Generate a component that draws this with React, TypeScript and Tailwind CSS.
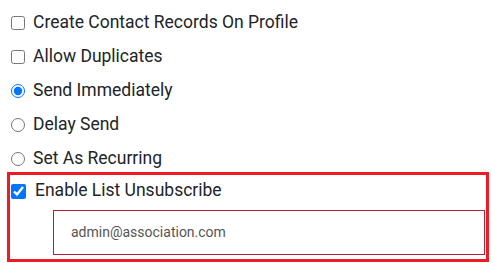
import React from "react";

const rowCls = "flex items-center h-[34px] pl-[11px] gap-[8px]";
const inputCls = "m-0 w-[14px] h-[14px] shrink-0";
const labelCls = "text-[17.5px] text-[#212529] leading-none";

export default function App() {
  return (
    <div className="w-[492px] h-[263px] bg-white pt-[6px] overflow-hidden" style={{ fontFamily: "Roboto, 'Liberation Sans', sans-serif" }}>
      <label className={rowCls}>
        <input type="checkbox" className={inputCls} />
        <span className={labelCls}>Create Contact Records On Profile</span>
      </label>
      <label className={rowCls}>
        <input type="checkbox" className={inputCls} />
        <span className={labelCls}>Allow Duplicates</span>
      </label>
      <label className={rowCls}>
        <input type="radio" name="send" defaultChecked className={inputCls} />
        <span className={labelCls}>Send Immediately</span>
      </label>
      <label className={rowCls}>
        <input type="radio" name="send" className={inputCls} />
        <span className={labelCls}>Delay Send</span>
      </label>
      <label className={rowCls}>
        <input type="radio" name="send" className={inputCls} />
        <span className={labelCls}>Set As Recurring</span>
      </label>
      <div className="-mt-[4px] ml-[7px] w-[482px] border-[3px] border-[#ed1c24] pb-[4px]">
        <label className="flex items-center h-[32px] pl-[1px] gap-[9px]">
          <input type="checkbox" defaultChecked className="m-0 w-[15px] h-[15px] shrink-0" />
          <span className={labelCls}>Enable List Unsubscribe</span>
        </label>
        <div className="mt-[3px] ml-[43px] w-[432px] h-[45px] border border-[#b22234] flex items-center pl-[17px] text-[14px] text-[#555]">
          admin@association.com
        </div>
      </div>
    </div>
  );
}
